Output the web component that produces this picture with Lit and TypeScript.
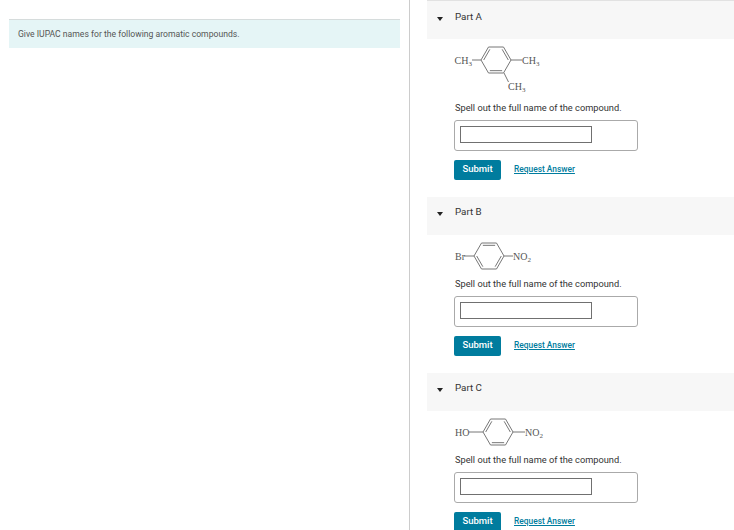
import { LitElement, css, html, svg } from 'lit'
import { customElement, property } from 'lit/decorators.js'

type Label = { x: number; y: number; text: string; sub?: string }
type Molecule = { height: number; cx: number; cy: number; start: number; bonds: number[][]; labels: Label[] }

const ring = (cx: number, cy: number) => [
  [cx - 15, cy],
  [cx - 7.5, cy - 13],
  [cx + 7.5, cy - 13],
  [cx + 15, cy],
  [cx + 7.5, cy + 13],
  [cx - 7.5, cy + 13],
]

// inner lines of the kekule ring, drawn on alternate sides
const inner = (cx: number, cy: number, start: number) => {
  const pts = ring(cx, cy)
  const out: number[][] = []
  for (let i = start; i < 6; i += 2) {
    const a = pts[i]
    const b = pts[(i + 1) % 6]
    const f = (p: number[]) => [p[0] + (cx - p[0]) * 0.18, p[1] + (cy - p[1]) * 0.18]
    const [ax, ay] = f(a)
    const [bx, by] = f(b)
    out.push([ax, ay, bx, by])
  }
  return out
}

@customElement('mol-figure')
export class MolFigure extends LitElement {
  static styles = css`
    :host {
      display: block;
    }
    svg {
      display: block;
    }
    line,
    polygon {
      stroke: #777;
      stroke-width: 1;
      fill: none;
    }
    text {
      font-family: 'Liberation Serif', serif;
      font-size: 10px;
      fill: #555;
    }
    .sub {
      font-size: 7px;
    }
  `

  @property({ attribute: false })
  mol!: Molecule

  protected render(): unknown {
    const m = this.mol
    const pts = ring(m.cx, m.cy)
    return html`
      <svg width="200" height=${m.height} viewBox="0 0 200 ${m.height}">
        <polygon points=${pts.map((p) => p.join(',')).join(' ')}></polygon>
        ${[...inner(m.cx, m.cy, m.start), ...m.bonds].map(
          (b) => svg`<line x1=${b[0]} y1=${b[1]} x2=${b[2]} y2=${b[3]}></line>`
        )}
        ${m.labels.map(
          (l) => svg`<text x=${l.x} y=${l.y}>${l.text}<tspan class="sub" dy="2">${l.sub ?? ''}</tspan></text>`
        )}
      </svg>
    `
  }
}

const parts: { name: string; mol: Molecule }[] = [
  {
    name: 'Part A',
    mol: {
      height: 61,
      cx: 42,
      cy: 21,
      start: 0,
      bonds: [
        [18, 21, 27, 21],
        [57, 21, 68, 21],
        [50, 34, 54.5, 43],
      ],
      labels: [
        { x: 0.5, y: 24.5, text: 'CH', sub: '3' },
        { x: 68, y: 24.5, text: 'CH', sub: '3' },
        { x: 54, y: 51, text: 'CH', sub: '3' },
      ],
    },
  },
  {
    name: 'Part B',
    mol: {
      height: 41,
      cx: 35,
      cy: 21,
      start: 1,
      bonds: [
        [10, 21, 20, 21],
        [50, 21, 59, 21],
      ],
      labels: [
        { x: 1, y: 24.5, text: 'Br' },
        { x: 59, y: 24.5, text: 'NO', sub: '2' },
      ],
    },
  },
  {
    name: 'Part C',
    mol: {
      height: 41,
      cx: 44,
      cy: 21,
      start: 0,
      bonds: [
        [15, 21, 29, 21],
        [59, 21, 71, 21],
      ],
      labels: [
        { x: 1, y: 24.5, text: 'HO' },
        { x: 71, y: 24.5, text: 'NO', sub: '2' },
      ],
    },
  },
]

@customElement('app-root')
export class AppRoot extends LitElement {
  static styles = css`
    :host {
      display: grid;
      grid-template-columns: 410px 1fr;
      height: 530px;
      overflow: hidden;
      background: #fff;
      font-family: Roboto, 'Liberation Sans', Arial, sans-serif;
      font-size: 9.75px;
      color: #333;
    }
    .left {
      border-right: 1px solid #ccc;
      padding: 19px 9px 0;
    }
    .intro {
      width: 391px;
      box-sizing: border-box;
      height: 29px;
      border-top: 1px solid #d6dcdc;
      background: #e5f5f6;
      padding: 0 9px 1px;
      display: flex;
      align-items: center;
      color: #555;
      font-size: 8.62px;
    }
    .right {
      padding-left: 17px;
    }
    .head {
      height: 38px;
      box-sizing: border-box;
      background: #f7f7f7;
      display: flex;
      gap: 12px;
      padding: 9px 0 0 10px;
    }
    .part:first-child .head {
      height: 39px;
      border-top: 1px solid #e2e2e2;
      padding-top: 10px;
    }
    .arrow {
      width: 0;
      height: 0;
      margin-top: 6px;
      border: 3px solid transparent;
      border-top: 4px solid #222;
      border-bottom: 0;
    }
    .body {
      padding-left: 27px;
      height: 138px;
    }
    .part:first-child .body {
      height: 158px;
    }
    .prompt {
      line-height: 15px;
      padding-left: 1px;
      font-size: 9.25px;
    }
    .answer {
      width: 184px;
      height: 31px;
      box-sizing: border-box;
      margin-top: 5px;
      border: 1px solid #aaa;
      border-radius: 3px;
      padding: 5px;
    }
    .answer input {
      display: block;
      box-sizing: border-box;
      width: 132px;
      height: 17px;
      margin: 0;
      border: 1px solid #707070;
      background: #fff;
    }
    .actions {
      display: flex;
      align-items: center;
      gap: 13px;
      margin-top: 9px;
    }
    button {
      width: 47px;
      height: 20px;
      border: 0;
      border-radius: 2px;
      padding: 0 0 4px;
      background: #007c9e;
      color: #fff;
      font: 500 9.5px Roboto, 'Liberation Sans', Arial, sans-serif;
    }
    a {
      color: #007c9e;
      text-decoration: underline;
      font-weight: 500;
      font-size: 8.4px;
      margin-bottom: 2px;
    }
  `

  protected render(): unknown {
    return html`
      <div class="left">
        <div class="intro">Give IUPAC names for the following aromatic compounds.</div>
      </div>
      <div class="right">
        ${parts.map(
          (p) => html`
            <section class="part">
              <div class="head"><span class="arrow"></span><span>${p.name}</span></div>
              <div class="body">
                <mol-figure .mol=${p.mol}></mol-figure>
                <div class="prompt">Spell out the full name of the compound.</div>
                <div class="answer"><input type="text" /></div>
                <div class="actions">
                  <button>Submit</button>
                  <a href="#">Request Answer</a>
                </div>
              </div>
            </section>
          `
        )}
      </div>
    `
  }
}
